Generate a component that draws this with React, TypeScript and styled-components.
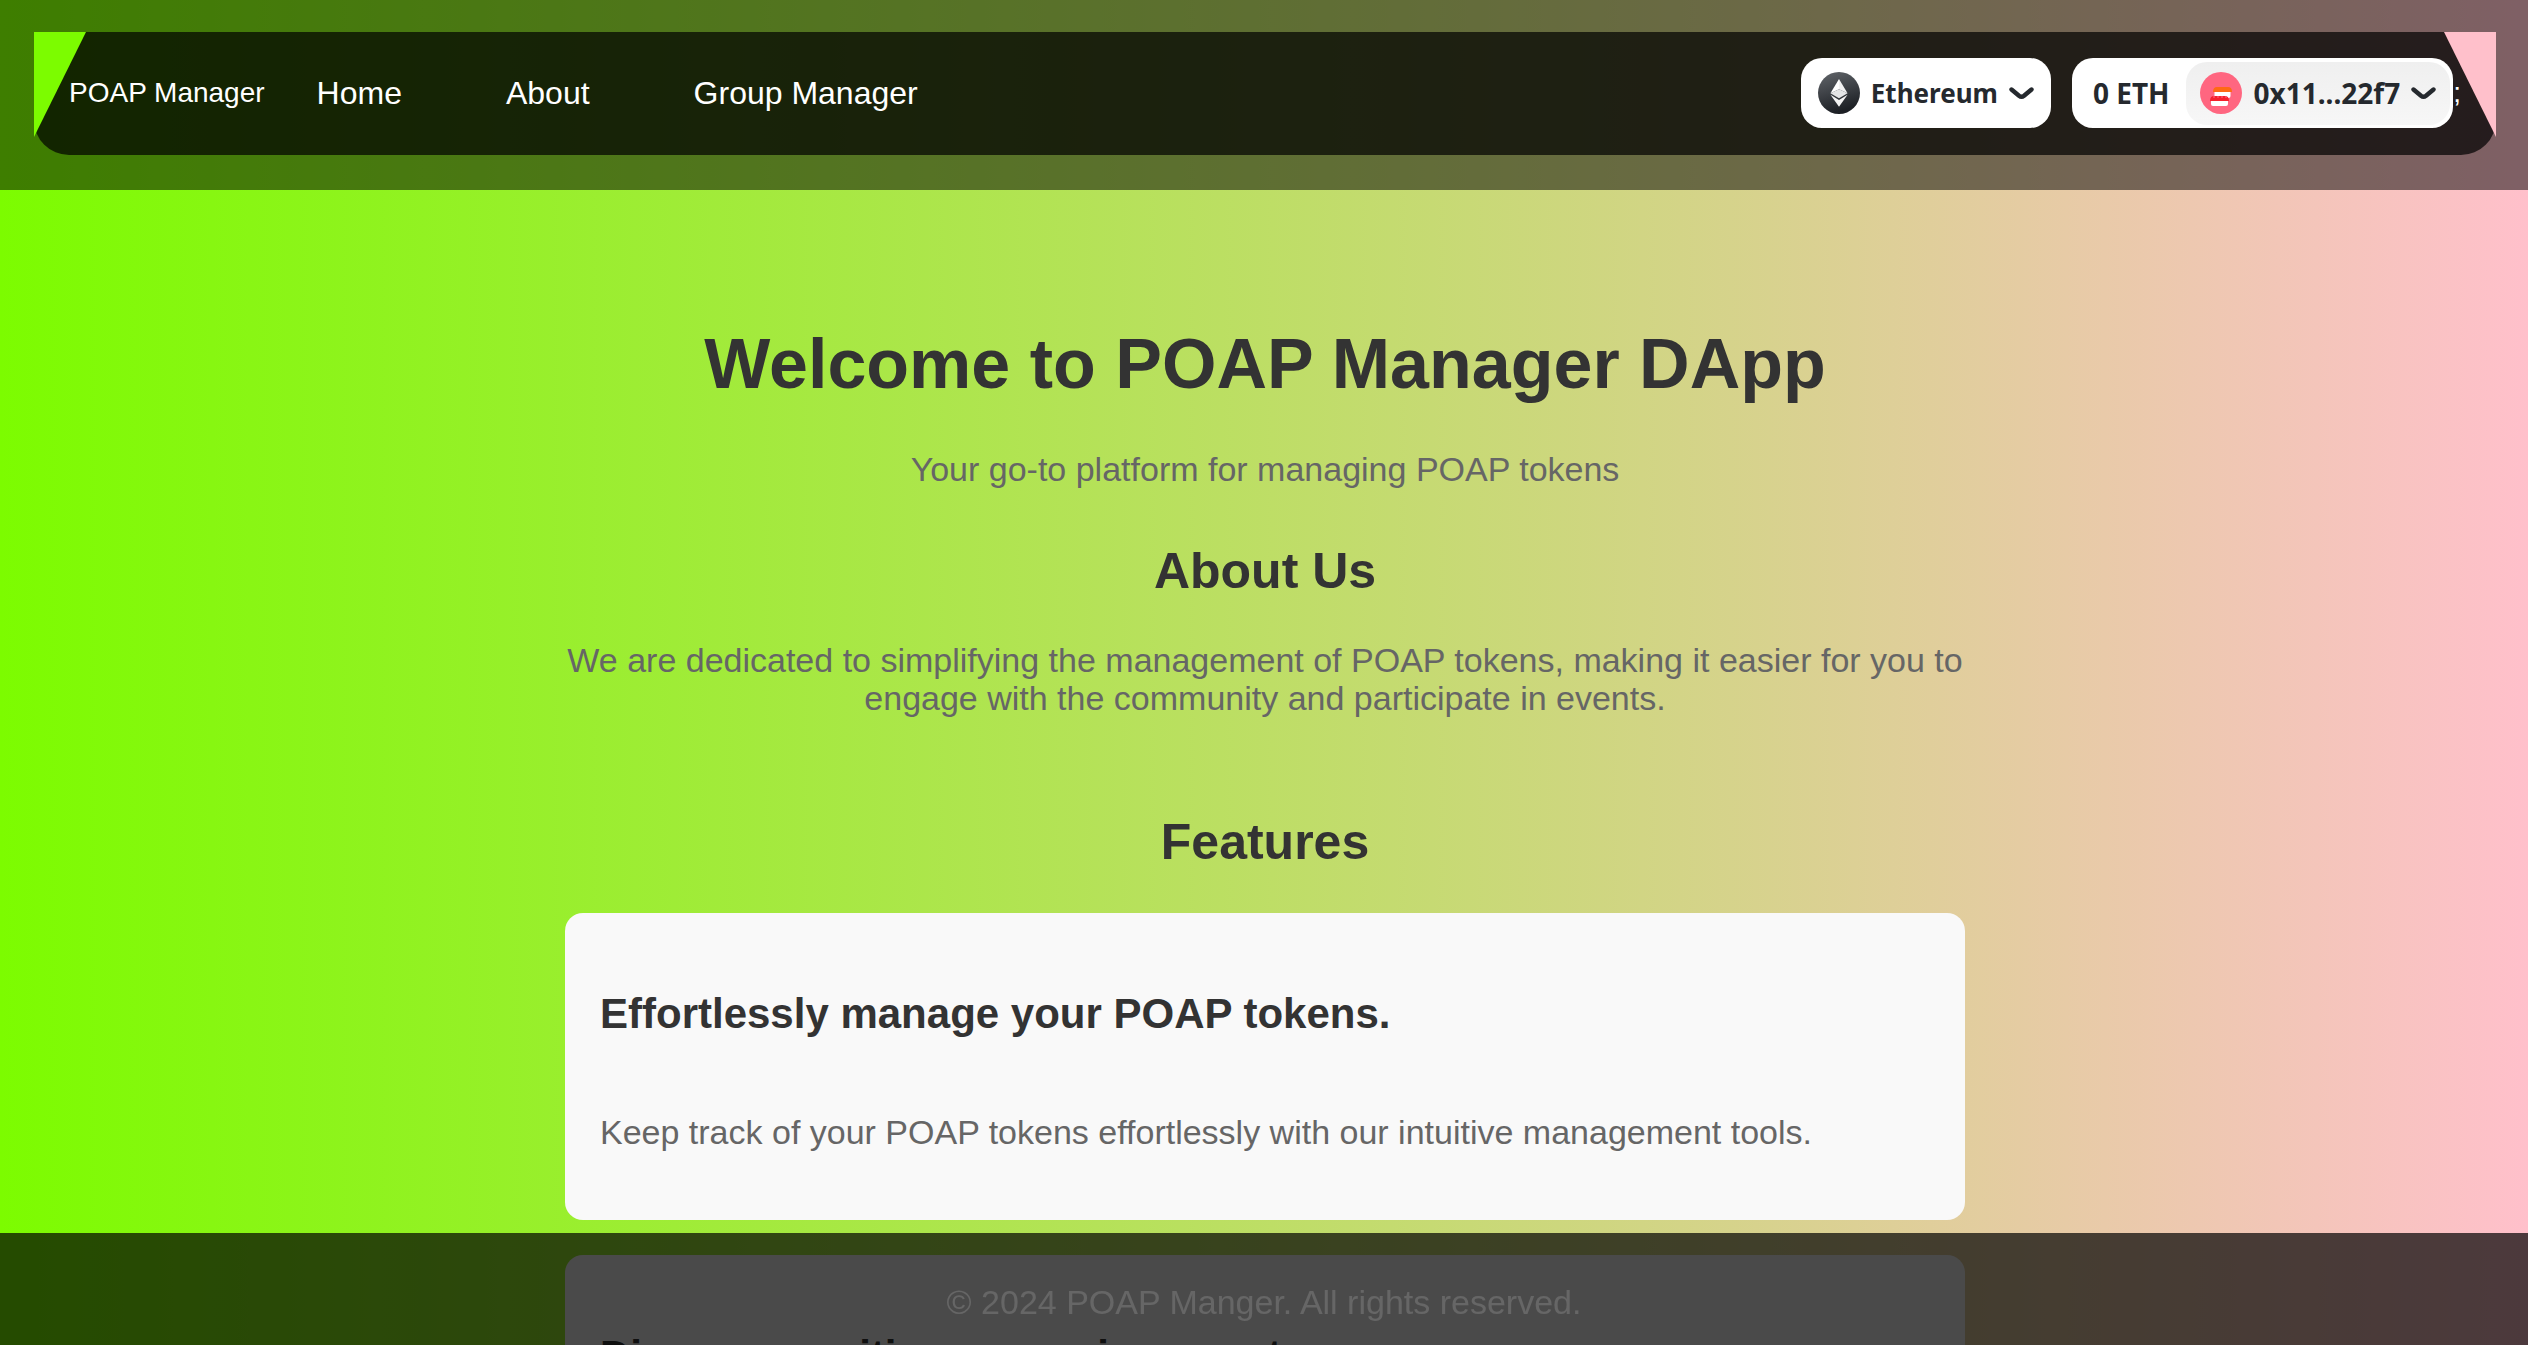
import React from "react";
import styled, { createGlobalStyle } from "styled-components";

const sans = `Arial, "Liberation Sans", sans-serif`;
const walletFont = `"Noto Sans", "Open Sans", sans-serif`;

const GlobalStyle = createGlobalStyle`
  *, *::before, *::after { box-sizing: border-box; }
  html, body { margin: 0; height: 100%; overflow: hidden; }
  body { background: linear-gradient(to right, lawngreen, pink); font-family: ${sans}; }
  #root { height: 100%; }
`;

const Page = styled.div`
  height: 100%;
  overflow: hidden;
`;

const Header = styled.header`
  padding: 32px 32px 35px 34px;
  background: rgba(0, 0, 0, 0.5);
`;

const Nav = styled.nav`
  position: relative;
  display: flex;
  align-items: center;
  justify-content: space-between;
  height: 123px;
  padding: 0 35px 1px;
  border-radius: 0 0 35px 35px;
  background: rgba(0, 0, 0, 0.7);
  color: #fff;
`;

const Corner = styled.span<{ $side: "left" | "right" }>`
  position: absolute;
  top: 0;
  ${(p) => p.$side}: 0;
  width: 52px;
  height: 105px;
  background: ${(p) => (p.$side === "left" ? "lawngreen" : "pink")};
  clip-path: ${(p) =>
    p.$side === "left"
      ? "polygon(0 0, 100% 0, 0 100%)"
      : "polygon(0 0, 100% 0, 100% 100%)"};
`;

const NavStart = styled.div`
  display: flex;
  align-items: center;
  gap: 52px;
`;

const Brand = styled.span`
  font-size: 28px;
  line-height: 32px;
`;

const Links = styled.ul`
  display: flex;
  gap: 104px;
  margin: 0;
  padding: 0;
  list-style: none;
`;

const NavLink = styled.a`
  color: #fff;
  font-size: 32px;
  line-height: 36px;
  text-decoration: none;
`;

const Wallet = styled.div`
  display: flex;
  align-items: center;
  gap: 21px;
`;

const PillButton = styled.button`
  display: flex;
  align-items: center;
  gap: 11px;
  height: 70px;
  padding: 0 17px;
  border: 0;
  border-radius: 21px;
  background: #fff;
  color: #25292e;
  font: 700 26px/42px ${walletFont};
`;

const Account = styled(PillButton)`
  gap: 17px;
  padding: 0 3px 0 21px;
  font-size: 28px;
`;

const AccountInner = styled.span`
  display: flex;
  align-items: center;
  gap: 11px;
  height: 63px;
  padding: 0 14px;
  border-radius: 21px;
  background: linear-gradient(#efefef, #f7f7f7);
`;

const AccountGroup = styled.div`
  display: flex;
  align-items: center;
  font-size: 28px;
`;

const Main = styled.main`
  width: 1402px;
  max-width: 100%;
  margin: 0 auto;
  padding: 134px 0 0 2px;
`;

const Section = styled.section`
  text-align: center;
`;

const Title = styled.h1`
  margin: 0 0 46px;
  color: #333;
  font-size: 70px;
  line-height: 80px;
`;

const Heading = styled.h2`
  margin: 0;
  color: #333;
  font-size: 50px;
  line-height: 58px;
`;

const Text = styled.p`
  margin: 0;
  color: #666;
  font-size: 34px;
  line-height: 38px;
`;

const Intro = styled(Section)`
  margin-bottom: 54px;
`;

const About = styled(Section)`
  display: grid;
  gap: 41px;
  margin-bottom: 96px;
`;

const Features = styled(Section)`
  display: grid;
  gap: 42px;
`;

const CardList = styled.div`
  display: grid;
  gap: 35px;
  text-align: left;
`;

const Card = styled.article`
  display: grid;
  gap: 75px;
  padding: 77px 35px 69px;
  border-radius: 18px;
  background: #f9f9f9;
`;

const CardTitle = styled.h3`
  margin: 0;
  color: #333;
  font-size: 42px;
  line-height: 48px;
`;

const Footer = styled.footer`
  position: fixed;
  right: 0;
  bottom: 0;
  left: 0;
  height: 112px;
  padding: 50px 35px 0;
  background: rgba(0, 0, 0, 0.7);
  text-align: center;
`;

const Chevron = () => (
  <svg width="25" height="13" viewBox="0 0 25 13" fill="none" aria-hidden="true">
    <path d="M2.5 2.5 10 8.8Q12.5 10.8 15 8.8L22.5 2.5" stroke="currentColor" strokeWidth="4.4" strokeLinecap="round" strokeLinejoin="round" />
  </svg>
);

const EthIcon = () => (
  <svg width="42" height="42" viewBox="0 0 28 28" aria-hidden="true">
    <defs>
      <linearGradient id="ethBg" x1="0" y1="0" x2="0.3" y2="1">
        <stop offset="0" stopColor="#62666b" />
        <stop offset="1" stopColor="#1d2025" />
      </linearGradient>
    </defs>
    <circle cx="14" cy="14" r="14" fill="url(#ethBg)" />
    <path d="M14 4.7 8.3 14.1 14 11.5Z" fill="#fff" />
    <path d="M14 4.7 19.7 14.1 14 11.5Z" fill="#f2f2f2" />
    <path d="M8.3 14.1 14 11.5 19.7 14.1 14 17.5Z" fill="#e4e5e6" />
    <path d="M8.3 15.2 14 18.6 19.7 15.2 14 23.2Z" fill="#f4f4f4" />
  </svg>
);

const AvatarIcon = () => (
  <svg width="42" height="42" viewBox="0 0 42 42" aria-hidden="true">
    <circle cx="21" cy="21" r="21" fill="#ff6680" />
    <path d="M14.5 20h16v4q0 2-2 2h-12q-2 0-2-2Z" fill="#fff" />
    <path d="M13 20q0-5 4-5h11q4 0 4 5Z" fill="#ff6a13" />
    <path d="M11 28h17v4q0 2-2 2H13q-2 0-2-2Z" fill="#fff" />
    <path d="M10 29q0-5 4-5h11q4 0 4 5Z" fill="#f5222d" />
    <path d="M14 24v2M18 24v2M22 24v2M26 24v2" stroke="#ff6680" strokeWidth="1" />
  </svg>
);

const links = ["Home", "About", "Group Manager"];

const features = [
  {
    title: "Effortlessly manage your POAP tokens.",
    text: "Keep track of your POAP tokens effortlessly with our intuitive management tools.",
  },
  {
    title: "Discover exciting upcoming events.",
    text: "Stay informed about upcoming events.",
  },
];

export default function App() {
  return (
    <Page>
      <GlobalStyle />
      <Header>
        <Nav>
          <Corner $side="left" />
          <Corner $side="right" />
          <NavStart>
            <Brand>POAP Manager</Brand>
            <Links>
              {links.map((label) => (
                <li key={label}>
                  <NavLink href="#">{label}</NavLink>
                </li>
              ))}
            </Links>
          </NavStart>
          <Wallet>
            <PillButton type="button">
              <EthIcon />
              Ethereum
              <Chevron />
            </PillButton>
            <AccountGroup>
              <Account type="button">
                0 ETH
                <AccountInner>
                  <AvatarIcon />
                  0x11...22f7
                  <Chevron />
                </AccountInner>
              </Account>
              ;
            </AccountGroup>
          </Wallet>
        </Nav>
      </Header>
      <Main>
        <Intro>
          <Title>Welcome to POAP Manager DApp</Title>
          <Text>Your go-to platform for managing POAP tokens</Text>
        </Intro>
        <About>
          <Heading>About Us</Heading>
          <Text>
            We are dedicated to simplifying the management of POAP tokens, making it easier for you
            to engage with the community and participate in events.
          </Text>
        </About>
        <Features>
          <Heading>Features</Heading>
          <CardList>
            {features.map((f) => (
              <Card key={f.title}>
                <CardTitle>{f.title}</CardTitle>
                <Text>{f.text}</Text>
              </Card>
            ))}
          </CardList>
        </Features>
      </Main>
      <Footer>
        <Text>© 2024 POAP Manger. All rights reserved.</Text>
      </Footer>
    </Page>
  );
}
